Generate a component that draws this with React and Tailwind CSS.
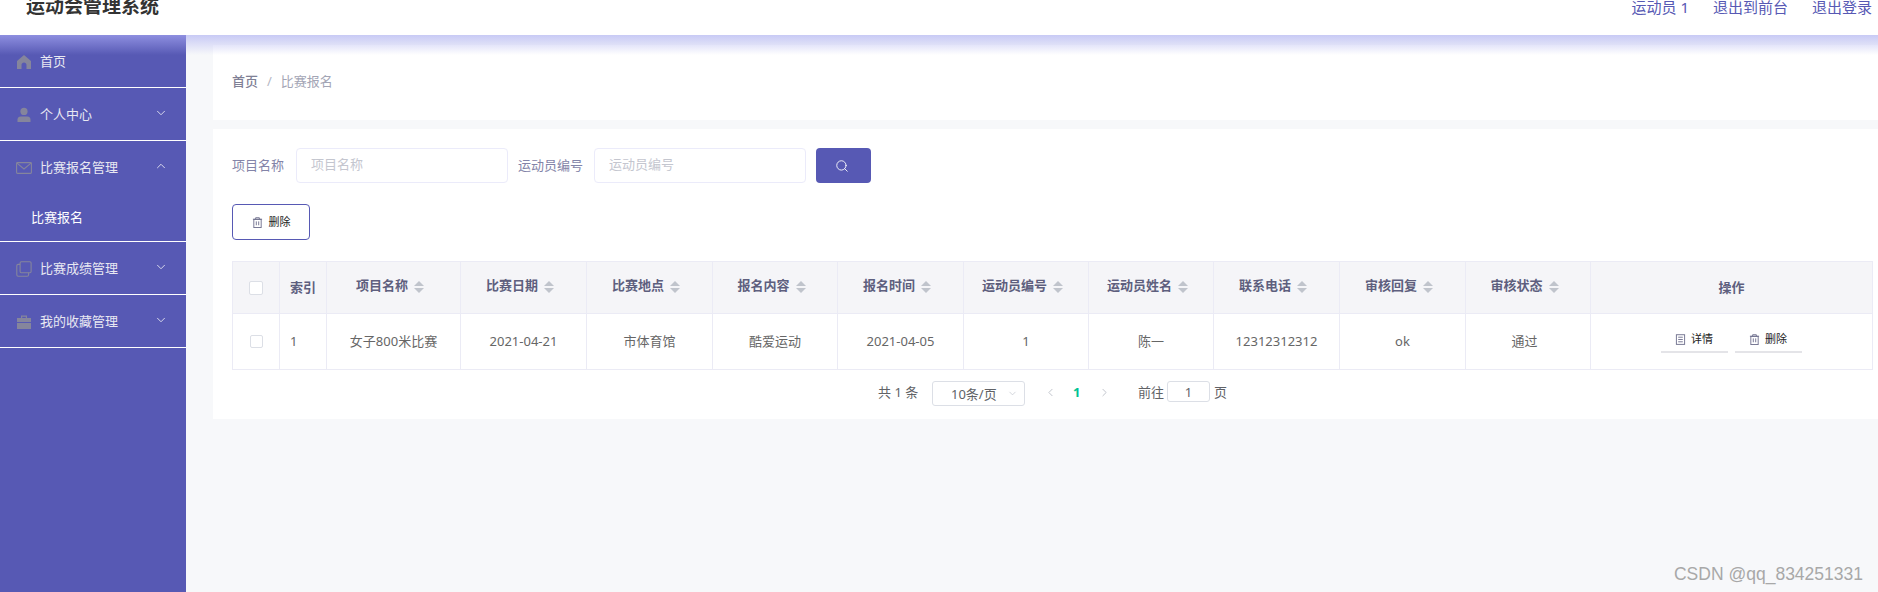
import { ChevronDown, ChevronUp, ChevronLeft, ChevronRight, Search } from 'lucide-react';

const menu = [
  { label: '首页', icon: 'home' },
  { label: '个人中心', icon: 'user', arrow: 'down' },
  { label: '比赛报名管理', icon: 'mail', arrow: 'up', children: ['比赛报名'] },
  { label: '比赛成绩管理', icon: 'copy', arrow: 'down' },
  { label: '我的收藏管理', icon: 'case', arrow: 'down' },
];

const columns = [
  { title: '项目名称', w: 'w-[134px]', value: '女子800米比赛' },
  { title: '比赛日期', w: 'w-[126px]', value: '2021-04-21' },
  { title: '比赛地点', w: 'w-[126px]', value: '市体育馆' },
  { title: '报名内容', w: 'w-[125px]', value: '酷爱运动' },
  { title: '报名时间', w: 'w-[126px]', value: '2021-04-05' },
  { title: '运动员编号', w: 'w-[125px]', value: '1' },
  { title: '运动员姓名', w: 'w-[125px]', value: '陈一' },
  { title: '联系电话', w: 'w-[126px]', value: '12312312312' },
  { title: '审核回复', w: 'w-[126px]', value: 'ok' },
  { title: '审核状态', w: 'w-[125px]', value: '通过', cell: 'pr-[7px]' },
];

function MenuIcon({ name }) {
  const cls = 'w-[16px] h-[16px] text-[#85859c]';
  if (name === 'home') {
    return (
      <svg viewBox="0 0 16 16" className={cls} fill="currentColor">
        <path d="M8 1 15 7V15H10.5V11C10.5 9.6 9.4 8.6 8 8.6S5.5 9.6 5.5 11V15H1V7Z" />
      </svg>
    );
  }
  if (name === 'user') {
    return (
      <svg viewBox="0 0 16 16" className={cls} fill="currentColor">
        <circle cx="8" cy="4.4" r="3.6" />
        <path d="M1.5 15V12.5C1.5 10.6 3 9.6 4.5 9.6H11.5C13 9.6 14.5 10.6 14.5 12.5V15Z" />
      </svg>
    );
  }
  if (name === 'mail') {
    return (
      <svg viewBox="0 0 16 16" className={cls} fill="none" stroke="currentColor" strokeWidth="1.1">
        <rect x="0.6" y="2.6" width="14.8" height="10.8" rx="0.8" />
        <path d="M1 3.2 8 9 15 3.2" />
      </svg>
    );
  }
  if (name === 'copy') {
    return (
      <svg viewBox="0 0 16 16" className={cls} fill="none" stroke="currentColor" strokeWidth="1.1">
        <rect x="4.1" y="0.8" width="11" height="11" rx="1.2" />
        <path d="M4.1 3.4H2.2C1.3 3.4 0.8 4 0.8 4.8V13.8C0.8 14.6 1.3 15.2 2.2 15.2H11.2C12 15.2 12.6 14.6 12.6 13.8V11.8" />
      </svg>
    );
  }
  return (
    <svg viewBox="0 0 16 16" className={cls} fill="currentColor">
      <path d="M5 1.5H11V4H15V8H1V4H5ZM6.2 2.7V4H9.8V2.7Z" fillRule="evenodd" />
      <path d="M1 9H15V15H1Z" />
    </svg>
  );
}

// el-icon-delete style bin
function BinIcon() {
  return (
    <svg viewBox="0 0 12 12" className="w-[11px] h-[11px] text-[#6e6f8c]" fill="none" stroke="currentColor" strokeWidth="1">
      <path d="M1 2.5H11M4 2.5V0.8H8V2.5" />
      <rect x="2" y="2.5" width="8" height="9" />
      <path d="M4.7 4.8V9M7.3 4.8V9" />
    </svg>
  );
}

// el-icon-tickets style sheet
function SheetIcon() {
  return (
    <svg viewBox="0 0 12 12" className="w-[11px] h-[11px] text-[#6e6f8c]" fill="none" stroke="currentColor" strokeWidth="1">
      <rect x="1.5" y="0.8" width="9" height="10.5" />
      <path d="M3.5 3.5H8.5M3.5 6H8.5M3.5 8.5H8.5" />
    </svg>
  );
}

function SortCaret() {
  return (
    <span className="inline-flex flex-col gap-[2px] ml-[6px] align-middle">
      <span className="w-0 h-0 border-x-[5px] border-x-transparent border-b-[5px] border-b-[#c0c4cc]" />
      <span className="w-0 h-0 border-x-[5px] border-x-transparent border-t-[5px] border-t-[#c0c4cc]" />
    </span>
  );
}

function Checkbox({ className }) {
  return <span className={`block bg-white border border-[#dcdfe6] rounded-[2px] ${className}`} />;
}

export default function App() {
  return (
    <div className="relative h-[592px] overflow-hidden flex flex-col bg-[#f7f8fa] font-['Noto_Sans','Noto_Sans_CJK_SC',sans-serif]">
      {/* Top bar, the title is cut off by the top of the screenshot */}
      <header className="h-[35px] shrink-0 bg-white flex items-center justify-between pb-[21px] pl-[26px] pr-[6px]">
        <h1 className="text-[19px] font-bold text-[#333333] leading-none -mt-[2px]">运动会管理系统</h1>
        <div className="flex gap-[24px] text-[15px] leading-none text-[#5759b4]">
          <span>运动员 1</span>
          <span>退出到前台</span>
          <span>退出登录</span>
        </div>
      </header>

      <div className="relative flex flex-1 min-h-0">
        {/* Shadow falling from the top bar */}
        <div className="absolute left-[186px] right-0 top-0 h-[20px] bg-gradient-to-b from-[#c8caf5] to-transparent" />
        <div className="absolute left-0 w-[186px] top-0 h-[20px] bg-gradient-to-b from-[#8e8fe0] to-transparent" />

        <aside className="w-[186px] shrink-0 bg-[#5759b4]">
          {menu.map((item) => (
            <div key={item.label} className="border-b-[1.5px] border-white">
              <div className="h-[52px] flex items-center pt-[2px] pl-[16px] pr-[18px] text-[13px] text-[#e8e8f2]">
                <MenuIcon name={item.icon} />
                <span className="ml-[8px] flex-1">{item.label}</span>
                {item.arrow === 'down' && <ChevronDown size={14} strokeWidth={1.5} className="-mt-[5px]" />}
                {item.arrow === 'up' && <ChevronUp size={14} strokeWidth={1.5} className="-mt-[5px]" />}
              </div>
              {item.children?.map((child) => (
                <div key={child} className="h-[48px] flex items-center pt-[2px] pl-[31px] text-[13px] text-white">
                  {child}
                </div>
              ))}
            </div>
          ))}
        </aside>

        <main className="flex-1 min-w-0 pl-[27px] pt-[10px]">
          <div className="h-[75px] bg-white flex items-center pl-[19px] pb-[1px] text-[13px]">
            <span className="text-[#7f8095] font-medium">首页</span>
            <span className="mx-[9px] text-[#b5b7c4]">/</span>
            <span className="text-[#a3a5b5]">比赛报名</span>
          </div>

          <div className="mt-[9px] h-[290px] bg-white pl-[19px] pr-[5px] pt-[19px]">
            <div className="flex items-center h-[35px] text-[13px]">
              <span className="w-[64px] text-[#8384a8]">项目名称</span>
              <div className="w-[212px] h-[35px] border border-[#ebebfa] rounded-[4px] flex items-center pl-[14px] pb-[2px] text-[#c4c6cf]">
                项目名称
              </div>
              <span className="w-[86px] pl-[10px] text-[#8384a8]">运动员编号</span>
              <div className="w-[212px] h-[35px] border border-[#ebebfa] rounded-[4px] flex items-center pl-[14px] pb-[2px] text-[#c4c6cf]">
                运动员编号
              </div>
              <button className="ml-[10px] w-[55px] h-[35px] bg-[#5759b4] rounded-[4px] flex items-center justify-center pr-[4px]">
                <Search size={14} strokeWidth={1.5} className="text-white" />
              </button>
            </div>

            <button className="mt-[21px] w-[78px] h-[36px] border border-[#5759b4] rounded-[4px] flex items-center justify-center gap-[6px] text-[11px] text-[#222222]">
              <BinIcon />
              删除
            </button>

            <table className="mt-[21px] w-[1641px] table-fixed border-collapse text-[13px]">
              <colgroup>
                <col className="w-[47px]" />
                <col className="w-[47px]" />
                {columns.map((col) => (
                  <col key={col.title} className={col.w} />
                ))}
                <col className="w-[282px]" />
              </colgroup>
              <thead>
                <tr className="h-[52px] bg-[#f5f5f8] text-[#5e5f7e]">
                  <th className="border border-[#ebebf5]">
                    <Checkbox className="w-[14px] h-[14px] mx-auto" />
                  </th>
                  <th className="border border-[#ebebf5] font-bold">索引</th>
                  {columns.map((col) => (
                    <th key={col.title} className="border border-[#ebebf5] font-bold pr-[7px] pb-[3px]">
                      {col.title}
                      <SortCaret />
                    </th>
                  ))}
                  <th className="border border-[#ebebf5] font-bold">操作</th>
                </tr>
              </thead>
              <tbody>
                <tr className="h-[56px] text-[#666666] text-center">
                  <td className="border border-[#ebebf5]">
                    <Checkbox className="w-[13px] h-[13px] mx-auto" />
                  </td>
                  <td className="border border-[#ebebf5] text-left pl-[10px]">1</td>
                  {columns.map((col) => (
                    <td key={col.title} className={`border border-[#ebebf5] ${col.cell || ''}`}>
                      {col.value}
                    </td>
                  ))}
                  <td className="border border-[#ebebf5]">
                    <div className="flex justify-center gap-[7px] text-[11px] text-[#222222] -mt-[3px] pr-[1px]">
                      <span className="w-[67px] h-[25px] border-b-2 border-[#e4e4e8] flex items-center justify-center gap-[5px]">
                        <SheetIcon />
                        详情
                      </span>
                      <span className="w-[67px] h-[25px] border-b-2 border-[#e4e4e8] flex items-center justify-center gap-[5px]">
                        <BinIcon />
                        删除
                      </span>
                    </div>
                  </td>
                </tr>
              </tbody>
            </table>

            <div className="flex items-start mt-[11px] pl-[646px] text-[13px] leading-[22px] text-[#606266]">
              <span className="w-[54px]">共 1 条</span>
              <div className="w-[93px] h-[25px] border border-[#dcdfe6] rounded-[3px] flex items-center pl-[18px] pr-[6px] text-[#606266]">
                <span className="flex-1">10条/页</span>
                <ChevronDown size={11} strokeWidth={1.5} className="text-[#c0c4cc]" />
              </div>
              <ChevronLeft size={13} strokeWidth={1.8} className="ml-[19px] mt-[5px] text-[#c0c4cc]" />
              <span className="ml-[16px] w-[8px] font-bold text-[#00c292]">1</span>
              <ChevronRight size={13} strokeWidth={1.8} className="ml-[17px] mt-[5px] text-[#c0c4cc]" />
              <span className="ml-[27px]">前往</span>
              <div className="ml-[3px] w-[43px] h-[21px] border border-[#dcdfe6] rounded-[3px] flex items-center justify-center">
                1
              </div>
              <span className="ml-[4px]">页</span>
            </div>
          </div>
        </main>
      </div>

      {/* Watermark of the site the screenshot comes from */}
      <span className="absolute right-[15px] bottom-[9px] text-[17.5px] leading-none text-[#a8a8a8] font-['Liberation_Sans',sans-serif]">
        CSDN @qq_834251331
      </span>
    </div>
  );
}
